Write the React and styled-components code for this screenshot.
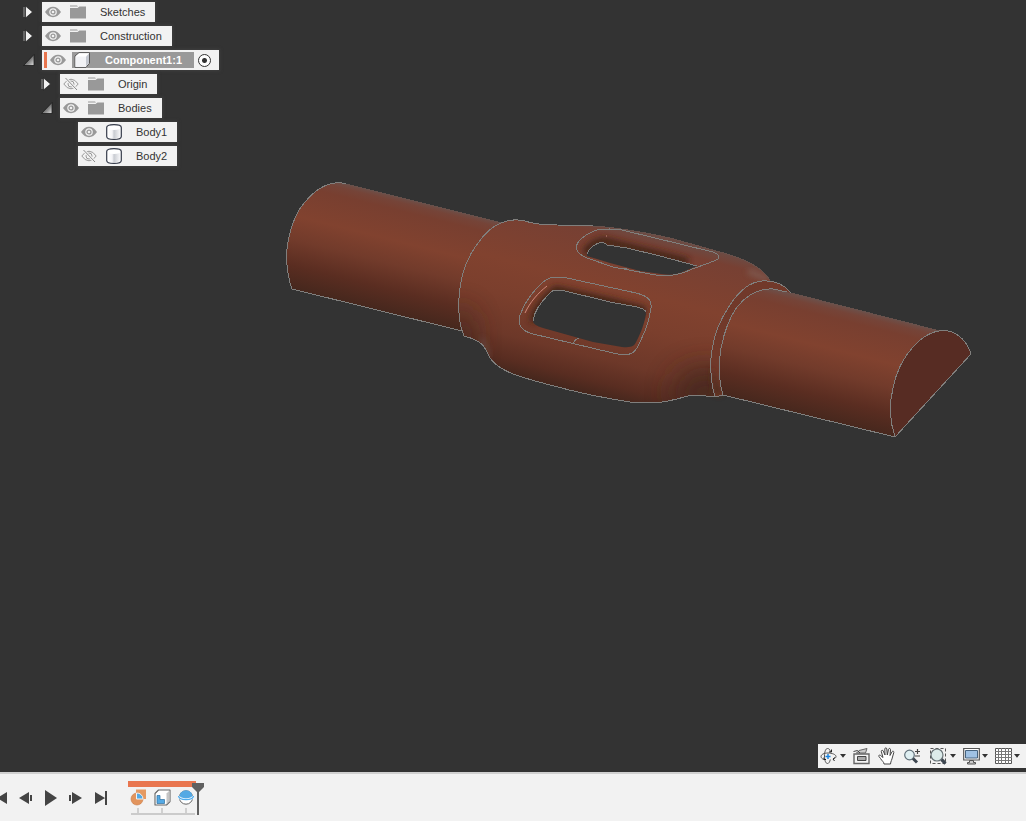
import { useState } from 'react'
import styled, { createGlobalStyle } from 'styled-components'

const GlobalStyle = createGlobalStyle`
    * {
        box-sizing: border-box;
    }
    body {
        margin: 0;
        background: #333;
        color: #333;
        font-family: "Liberation Sans", Arial, sans-serif;
        font-size: 11px;
    }
    button {
        padding: 0;
        border: none;
        background: transparent;
        color: inherit;
        font: inherit;
        cursor: pointer;
    }
    svg {
        display: block;
    }
`;

const Page = styled.div`
    display: flex;
    flex-direction: column;
    min-height: 100vh;
`;

const Viewport = styled.main`
    position: relative;
    flex: 1;
    display: flex;
    flex-direction: column;
    justify-content: space-between;
    padding: 2px 0 4px;
    overflow: hidden;
    background: #333;
`;

const ModelCanvas = styled.svg`
    position: absolute;
    inset: 0;
    width: 100%;
    height: 100%;
`;

const Browser = styled.nav`
    position: relative;
    align-self: flex-start;
    padding-left: 20px;
`;

const TreeList = styled.ul`
    list-style: none;
    display: flex;
    flex-direction: column;
    gap: 4px;
    margin: 0;
    padding: 0;
    & & {
        margin-top: 4px;
        padding-left: 18px;
    }
`;

const TreeRow = styled.div`
    display: flex;
    align-items: center;
    gap: 6px;
    height: 20px;
`;

const ToggleButton = styled.button`
    width: 16px;
    height: 16px;
    visibility: ${props => props.$hidden ? 'hidden' : 'visible'};
`;

const RowPanel = styled.div`
    display: flex;
    align-items: center;
    height: 20px;
    padding: 0 ${props => props.$active ? 8 : 0}px 0 ${props => props.$active ? 2 : 3}px;
    background: #f2f2f2;
    box-shadow: 0 0 3px 1px #3f3f3f;
`;

const ActiveBar = styled.span`
    width: 3px;
    height: 16px;
    margin-right: 3px;
    background: #e9764f;
`;

const EyeButton = styled.button`
    width: 16px;
    height: 16px;
`;

const NodeLabel = styled.span`
    display: flex;
    align-items: center;
    gap: 14px;
    height: 16px;
    margin-left: ${props => props.$active ? 6 : 9}px;
    padding: 0 ${props => props.$active ? 12 : 10}px 0 ${props => props.$active ? 2 : 0}px;
    background: ${props => props.$active ? '#999' : 'transparent'};
    color: ${props => props.$active ? '#fff' : '#333'};
    font-weight: ${props => props.$active ? 'bold' : 'normal'};
    line-height: 16px;
`;

const ActivateRadio = styled.input`
    appearance: none;
    width: 13px;
    height: 13px;
    margin: 0 0 0 4px;
    border: 1px solid #333;
    border-radius: 50%;
    background: radial-gradient(circle, #333 2px, #fff 3px);
`;

const NavBar = styled.div`
    position: relative;
    align-self: flex-end;
    display: flex;
    align-items: center;
    height: 24px;
    padding: 0 6px 0 2px;
    gap: 7px;
    background: #f2f2f2;
`;

const NavButton = styled.button`
    display: flex;
    align-items: center;
    gap: 2px;
    height: 24px;
`;

const Timeline = styled.footer`
    display: flex;
    height: 49px;
    overflow: hidden;
    border-top: 2px solid #d0d0d0;
    background: #f2f2f2;
`;

const Transport = styled.div`
    display: flex;
    align-items: center;
    margin: 0 13px 0 -12px;
`;

const TransportButton = styled.button`
    width: 25px;
    height: 24px;
    display: flex;
    align-items: center;
    justify-content: center;
`;

const Track = styled.div`
    position: relative;
    padding-top: 7px;
`;

const GroupBar = styled.div`
    width: 68px;
    height: 6px;
    margin-left: 2px;
    background: #e9764f;
`;

const FeatureList = styled.div`
    display: flex;
`;

const FeatureButton = styled.button`
    display: flex;
    flex-direction: column;
    align-items: center;
    justify-content: space-between;
    width: 24px;
    height: 26px;
    padding-top: 2px;
    &::after {
        content: '';
        width: 2px;
        height: 5px;
        background: #d0d0d0;
    }
`;

const TrackLine = styled.div`
    width: 64px;
    height: 2px;
    margin-left: 5px;
    background: #cbcbcb;
`;

const Marker = styled.svg`
    position: absolute;
    top: 9px;
    left: 66px;
`;

const EyeIcon = ({ off }) => (
    <svg width="16" height="16" viewBox="0 0 16 16" fill="none">
        {off ? (
            <>
                <path d="M.8 8Q4 3.2 8 3.2T15.2 8Q12 12.8 8 12.8T.8 8Z" stroke="#999" />
                <circle cx="8" cy="8" r="3" stroke="#999" />
                <path d="M2.5 2 14 14" stroke="#f2f2f2" strokeWidth="2.6" />
                <path d="M2.5 2 14 14" stroke="#8c8c8c" strokeWidth="1" />
            </>
        ) : (
            <>
                <path d="M0 8Q3.5 2.8 8 2.8T16 8Q12.5 13.2 8 13.2T0 8Z" fill="#999" />
                <circle cx="8" cy="8" r="3.2" stroke="#f2f2f2" strokeWidth="1.2" />
                <circle cx="8" cy="8" r="1.3" fill="#f2f2f2" />
            </>
        )}
    </svg>
)

const FolderIcon = () => (
    <svg width="16" height="16" viewBox="0 0 16 16">
        <path d="M0 1.500h7l1 1H0zM0 4h7.500l2-1.500H16V14.500H0z" fill="#999" />
    </svg>
)

const BodyIcon = () => (
    <svg width="16" height="16" viewBox="0 0 16 16">
        <defs>
            <linearGradient id="cyl">
                <stop offset="0" stopColor="#fff" />
                <stop offset=".35" stopColor="#f4f4f7" />
                <stop offset=".5" stopColor="#c9ccd2" />
                <stop offset="1" stopColor="#f6f6f8" />
            </linearGradient>
        </defs>
        <path d="M.7 3.500C.7 1.500 3 .6 8 .6s7.300.9 7.300 2.900v9c0 2-2.300 2.900-7.300 2.900S.7 14.500.7 12.500z" fill="#fff" stroke="#343a49" strokeWidth="1.200" />
        <path d="M2 5q6 2 12 0v7.500q-1 1.800-6 1.800t-6-1.800z" fill="url(#cyl)" />
    </svg>
)

const ComponentIcon = () => (
    <svg width="17" height="16" viewBox="0 0 17 16">
        <path d="M1 4 5 .6h10.500v10.500L12 15.400H1z" fill="#fff" stroke="#555" strokeWidth="1" strokeLinejoin="round" />
        <path d="M12 4.500 15 1.500v9.300L12 14.500z" fill="#c3c7cf" />
        <path d="M1.500 4.500H12v10.400H1.500z" fill="#f2f3f6" />
    </svg>
)

const ToggleIcon = ({ open }) => (
    <svg width="16" height="16" viewBox="0 0 16 16">
        <defs>
            <linearGradient id="tog" x1="0" y1="0" x2="1" y2="1">
                <stop offset=".4" stopColor="#555" />
                <stop offset=".9" stopColor="#ccc" />
            </linearGradient>
        </defs>
        {open ? (
            <path d="M14 2.500v11H3.500z" fill="url(#tog)" stroke="#1c1c1c" strokeWidth=".8" />
        ) : (
            <>
                <path d="M4 3v10" stroke="#999" strokeWidth="1" />
                <path d="M5.500 2 12.500 8l-7 6z" fill="#f2f2f2" stroke="#111" strokeWidth=".6" />
            </>
        )}
    </svg>
)

const nodeIcons = {
    folder: FolderIcon,
    body: BodyIcon,
    component: ComponentIcon,
}

const tree = [
    { name: 'Sketches', icon: 'folder', visible: true, expandable: true },
    { name: 'Construction', icon: 'folder', visible: true, expandable: true },
    {
        name: 'Component1:1', icon: 'component', visible: true, active: true, expandable: true,
        children: [
            { name: 'Origin', icon: 'folder', visible: false, expandable: true },
            {
                name: 'Bodies', icon: 'folder', visible: true, expandable: true,
                children: [
                    { name: 'Body1', icon: 'body', visible: true },
                    { name: 'Body2', icon: 'body', visible: false },
                ],
            },
        ],
    },
]

const TreeNode = ({ node }) => {
    const [open, setOpen] = useState(Boolean(node.children));
    const [visible, setVisible] = useState(node.visible);
    const Icon = nodeIcons[node.icon];

    return (
        <li>
            <TreeRow>
                <ToggleButton
                    $hidden={!node.expandable}
                    aria-label={`Expand ${node.name}`}
                    aria-expanded={open}
                    onClick={() => setOpen(!open)}
                >
                    <ToggleIcon open={open} />
                </ToggleButton>
                <RowPanel $active={node.active}>
                    {node.active && <ActiveBar />}
                    <EyeButton aria-label={`Show ${node.name}`} aria-pressed={visible} onClick={() => setVisible(!visible)}>
                        <EyeIcon off={!visible} />
                    </EyeButton>
                    <NodeLabel $active={node.active}>
                        <Icon />
                        {node.name}
                    </NodeLabel>
                    {node.active && <ActivateRadio type="radio" name="active" defaultChecked aria-label={`Activate ${node.name}`} />}
                </RowPanel>
            </TreeRow>
            {open && node.children && (
                <TreeList>
                    {node.children.map(child => <TreeNode key={child.name} node={child} />)}
                </TreeList>
            )}
        </li>
    )
}

// Part outlines, in canvas units
const leftShaft = 'M292 289C286 272 285 252 289 237C292 222 298 210 305 202C315 190 325 184 335 183Q340 182 346 184L502 223L520 290L464 332Z'
const hub = 'M464 336C460 327 458 315 459 298C460 280 464 265 472 252C480 239 490 227 501 223Q513 218 525 221Q536 225 557 225Q578 226 593 226Q625 228 670 238L720 252C735 256 748 261 757 267Q764 272 770 280L775 300L723 395L715 397Q702 395 688 396C677 399 665 403 650 403Q640 403 630 402Q590 396 550 385Q530 380 513 374Q496 367 490 358C485 347 483 341 463 336Z'
const collar = 'M715 397C710 380 710 360 712 350C714 335 721 318 730 305C739 291 750 282 762 281C775 280 784 284 791 293L723 396Z'
const rightShaft = 'M723 395C718 378 719 360 721 348C724 333 730 317 737 307C746 296 758 288 773 289L787 292L940 331L971 354L895 437Z'
const cap = 'M895 437C890 422 889 404 893 388C896 373 903 358 913 347C924 335 936 329 948 331C959 333 968 343 971 354Z'
const lowerRim = 'M557 277Q562 277 567 278L636 293C648 296 652 300 651 308C649 324 643 336 637 348C632 356 624 356 613 353L533 334C521 331 517 324 520 315C524 304 532 292 543 282Q549 277 557 277Z'
const lowerHole = 'M557 290Q562 290 565 291L610 302L637 307Q646 309 646 314C644 326 639 337 635 344Q632 348 622 347L593 342L543 328Q533 325 533 321C534 312 541 302 549 294Q552 290 557 290Z'
const upperRim = 'M597 230Q610 228 622 230L713 252Q721 255 718 259C711 263 699 266 690 270C677 276 663 277 650 274L613 267L587 258C575 253 574 246 580 240Q587 233 597 230Z'
const upperHole = 'M587 254C589 248 596 243 602 242Q605 243 607 245L627 248L660 256L697 266L680 273Q672 276 661 274L640 271L610 263L587 256Z'

const Model = () => (
    <ModelCanvas viewBox="0 0 1026 772" preserveAspectRatio="xMidYMid meet" role="img" aria-label="Body1">
        <defs>
            <linearGradient id="shaft" gradientUnits="userSpaceOnUse" x1="342" y1="182" x2="314" y2="295">
                <stop offset="0" stopColor="#6c504a" />
                <stop offset=".05" stopColor="#754438" />
                <stop offset=".12" stopColor="#783f30" />
                <stop offset=".38" stopColor="#81422f" />
                <stop offset=".58" stopColor="#723b2b" />
                <stop offset=".8" stopColor="#5a2d21" />
                <stop offset="1" stopColor="#45271d" />
            </linearGradient>
            <linearGradient id="hubFill" gradientUnits="userSpaceOnUse" x1="640" y1="233" x2="599" y2="396">
                <stop offset="0" stopColor="#6d4a42" />
                <stop offset=".06" stopColor="#774033" />
                <stop offset=".35" stopColor="#81422f" />
                <stop offset=".55" stopColor="#7b3f2d" />
                <stop offset=".78" stopColor="#6d3829" />
                <stop offset=".92" stopColor="#592d21" />
                <stop offset="1" stopColor="#46271d" />
            </linearGradient>
            <filter id="soft3" x="-50%" y="-50%" width="200%" height="200%"><feGaussianBlur stdDeviation="3" /></filter>
            <filter id="soft14" x="-100%" y="-100%" width="300%" height="300%"><feGaussianBlur stdDeviation="14" /></filter>
            <clipPath id="hubClip"><path d={hub} /></clipPath>
            <clipPath id="lowerClip"><path d={lowerRim} /></clipPath>
            <clipPath id="upperClip"><path d={upperRim} /></clipPath>
        </defs>
        <path d={leftShaft} fill="url(#shaft)" />
        <path d={hub} fill="url(#hubFill)" />
        <g clipPath="url(#hubClip)">
            <ellipse cx="460" cy="336" rx="14" ry="28" fill="#43261d" opacity=".8" filter="url(#soft14)" />
            <ellipse cx="706" cy="392" rx="34" ry="26" fill="#43261d" opacity=".8" filter="url(#soft14)" />
            <path d="M482 338 489 357" stroke="#77655f" strokeWidth="2" filter="url(#soft3)" />
            <path d="M748 271 768 279" stroke="#847069" strokeWidth="4" opacity=".8" filter="url(#soft3)" />
        </g>
        <path d={collar} fill="#71392a" />
        <path d="M711 365 723 395H714Z" fill="#4b291f" filter="url(#soft3)" />
        <path d={rightShaft} fill="url(#shaft)" />
        <path d={cap} fill="#572c23" />
        <g clipPath="url(#lowerClip)">
            <path d="M534 322Q535 307 556 290L610 302 646 311" fill="none" stroke="#3e2018" strokeWidth="8" filter="url(#soft3)" />
            <path d="M547 286C538 293 530 302 525 313" fill="none" stroke="#cf8a7b" strokeWidth="1" />
        </g>
        <g clipPath="url(#upperClip)">
            <path d="M585 254Q590 243 604 241L688 262" fill="none" stroke="#3e2018" strokeWidth="7" filter="url(#soft3)" />
            <path d="M606 236h1" stroke="#c58b7e" />
        </g>
        <path d={lowerHole} fill="#333" />
        <path d={upperHole} fill="#333" />
        <g fill="none" stroke="#807f7d" strokeWidth="1" shapeRendering="crispEdges">
            <path d="M346 184 502 223M593 226Q625 228 670 238L720 252C735 256 748 261 757 267Q764 272 770 280M791 293 940 331" stroke="#68514b" />
            <path d="M462 331 292 289C286 272 285 252 289 237C292 222 298 210 305 202C315 190 325 184 335 183Q340 182 346 184" />
            <path d="M593 226 557 225Q536 225 525 221Q513 218 501 223C490 227 480 239 472 252C464 265 460 280 459 298C458 315 460 327 464 336C483 341 485 347 490 358Q496 367 513 374Q530 380 550 385Q590 396 630 402Q640 403 650 403C665 403 677 399 688 396Q702 395 715 397L723 395 895 437" />
            <path d="M715 397C710 380 710 360 712 350C714 335 721 318 730 305C739 291 750 282 762 281C775 280 784 284 791 293" />
            <path d="M723 395C718 378 719 360 721 348C724 333 730 317 737 307C746 296 758 288 773 289L787 292" />
            <path d={cap} />
            <path d={lowerRim} />
            <path d={upperRim} />
            <path d="M533 321C534 312 541 302 549 294Q552 290 557 290Q562 290 565 291L610 302 637 307Q645 309 646 312M573 344Q575 339 579 338M587 254C589 248 596 243 602 242Q605 243 607 245L627 248 660 256 697 266M621 269l6-1" />
        </g>
    </ModelCanvas>
)

const DropArrow = () => (
    <svg width="6" height="4" viewBox="0 0 6 4"><path d="M0 0h6L3 3.800z" fill="#333" /></svg>
)

const navTools = [
    {
        name: 'Orbit', menu: true,
        icon: (
            <svg width="18" height="18" viewBox="0 0 18 18" fill="none" stroke="#555">
                <path d="M4 12.500C2 12 1 10.500 1 9.500 1 7.500 4 6 8 6s8 1.500 8 3.500c0 1.200-1 2-2.500 2.500" />
                <path d="M10.500 5C10 2.500 9 1.500 7.500 1.500 5.500 1.500 4.500 5 4.500 9s1 7.500 3 7.500c1.300 0 2.300-1.500 2.800-4" />
                <path d="M6 12.500H4V10.500M9 5h2.500V2.500M15 10.500l-2 1.500 1.500 2" stroke="#222" />
                <path d="M5.500 9.500h5M8 7v5" stroke="#1682e0" strokeWidth="1.400" />
            </svg>
        ),
    },
    {
        name: 'Look At',
        icon: (
            <svg width="17" height="18" viewBox="0 0 17 18" fill="none" stroke="#666">
                <path d="M3.500 6 6 3.500l8-2L12.500 6z" fill="#ccc" />
                <path d="M.5 4.500 4.500 3.500 7 6" stroke="#444" />
                <path d="M1 7h15v9.500H1z" fill="#f6f6f6" strokeWidth="1.400" />
                <path d="M4.500 9.500h8.500v4H4.500z" fill="#aaa" stroke="#444" />
            </svg>
        ),
    },
    {
        name: 'Pan',
        icon: (
            <svg width="19" height="18" viewBox="0 0 19 18" fill="#fff" stroke="#444" strokeWidth="1" strokeLinejoin="round">
                <path d="M7 17c0-2-2-3-3.500-5.500L1.900 9.400c-.6-1.200.8-1.700 1.600-1L6 10.500 4.300 4.500c-.2-1.400 1.500-1.700 2-.4L8 8 7.800 2c0-1.500 1.900-1.500 2 0L10.300 8l1.200-5.700c.4-1.400 2.100-1 2 .4L13 8.500l2-3.700c.7-1.200 2.200-.5 1.800.7L15.500 10c-.6 3-1.700 4-2 7z" />
            </svg>
        ),
    },
    {
        name: 'Zoom',
        icon: (
            <svg width="18" height="18" viewBox="0 0 18 18" fill="none" stroke="#444" strokeWidth="1.200">
                <circle cx="6.500" cy="8" r="4.800" fill="#dfeff2" stroke="#60707a" />
                <path d="m10 11.500 4 4" stroke="#3d4650" strokeWidth="3" />
                <path d="M12 4.500h5M14.500 2v5M12 9h5" />
            </svg>
        ),
    },
    {
        name: 'Fit', menu: true,
        icon: (
            <svg width="20" height="18" viewBox="0 0 20 18" fill="none" stroke="#555">
                <path d="M2.500 1.500h15v15h-15z" strokeDasharray="3 2" />
                <circle cx="9" cy="8" r="6" fill="#dcebea" stroke="#687276" strokeWidth="1.200" />
                <path d="m13.500 12.500 4 4" stroke="#3d4650" strokeWidth="3.200" />
            </svg>
        ),
    },
    {
        name: 'Display Settings', menu: true,
        icon: (
            <svg width="17" height="18" viewBox="0 0 17 18" fill="none" stroke="#555">
                <path d="M.7 1.500h15.600v11.500H.7z" fill="#fff" strokeWidth="1.200" />
                <path d="M2.500 3.500h12v7.500h-12z" fill="#9fc1e3" stroke="#46637e" />
                <path d="M6.500 13.500h4v2h2v1.500h-8v-1.500h2z" fill="#ccc" />
            </svg>
        ),
    },
    {
        name: 'Grid and Snaps', menu: true,
        icon: (
            <svg width="17" height="18" viewBox="0 0 17 18" fill="none" stroke="#777">
                <path d="M.5 1.500h16v15H.5z" fill="#fff" stroke="#555" />
                <path d="M3.500 1v16M6.500 1v16M10.500 1v16M13.500 1v16M0 4.500h17M0 7.500h17M0 10.500h17M0 13.500h17" />
            </svg>
        ),
    },
]

const transportButtons = [
    { name: 'Go to start', path: 'M18 6v12L8 12zM5 6h2v12H5z' },
    { name: 'Step back', path: 'M15 6v12L5 12zM16 9h2v6h-2z' },
    { name: 'Play', path: 'M6 4v16l12-8z' },
    { name: 'Step forward', path: 'M8 6v12l10-6zM5 9h2v6H5z' },
    { name: 'Go to end', path: 'M6 6v12l10-6zM16 5h2v14h-2z' },
]

const features = [
    {
        name: 'Combine',
        icon: (
            <svg width="16" height="17" viewBox="0 0 16 17">
                <path d="M6 .5h10V10H6z" fill="#e59a63" />
                <circle cx="7" cy="10" r="6" fill="#e2945d" stroke="#c97a44" strokeWidth=".6" />
                <path d="M6.500 10V4a6 6 0 0 1 6.500 6z" fill="#54a9e4" stroke="#f2f2f2" strokeWidth="1" />
            </svg>
        ),
    },
    {
        name: 'Base Feature',
        icon: (
            <svg width="17" height="17" viewBox="0 0 17 17">
                <path d="M1 4.500 4.500 1H16v11.500L12.500 16H1z" fill="#fff" stroke="#666" strokeWidth="1.100" strokeLinejoin="round" />
                <path d="M12.500 4.500 15.500 1.500v10.700L12.500 15.500z" fill="#c5c5c5" />
                <path d="M3 6.500h3v4h4.500V14.500H3z" fill="#54a9e4" stroke="#2c6d9d" strokeWidth=".7" />
            </svg>
        ),
    },
    {
        name: 'Split Body',
        icon: (
            <svg width="16" height="17" viewBox="0 0 16 17">
                <circle cx="8" cy="8.500" r="6.700" fill="#fff" stroke="#666" />
                <path d="M1.300 8A6.700 6.700 0 0 1 14.700 8Q8 12 1.300 8z" fill="#54a9e4" />
                <path d="M.5 7Q1 10.500 8 10.500T15.500 7" fill="none" stroke="#fff" strokeWidth="2.500" />
                <path d="M.6 7Q1 10.500 8 10.500T15.400 7" fill="none" stroke="#4eabed" strokeWidth="1.300" />
            </svg>
        ),
    },
]

const App = () => {
    return (
        <Page>
            <GlobalStyle />
            <Viewport>
                <Model />
                <Browser aria-label="Browser">
                    <TreeList>
                        {tree.map(node => <TreeNode key={node.name} node={node} />)}
                    </TreeList>
                </Browser>
                <NavBar role="toolbar" aria-label="Navigation">
                    {navTools.map(tool => (
                        <NavButton key={tool.name} aria-label={tool.name}>
                            {tool.icon}
                            {tool.menu && <DropArrow />}
                        </NavButton>
                    ))}
                </NavBar>
            </Viewport>
            <Timeline>
                <Transport>
                    {transportButtons.map(button => (
                        <TransportButton key={button.name} aria-label={button.name}>
                            <svg width="24" height="24" viewBox="0 0 24 24" fill="#444"><path d={button.path} /></svg>
                        </TransportButton>
                    ))}
                </Transport>
                <Track>
                    <GroupBar />
                    <FeatureList>
                        {features.map(feature => (
                            <FeatureButton key={feature.name} aria-label={feature.name}>
                                {feature.icon}
                            </FeatureButton>
                        ))}
                    </FeatureList>
                    <TrackLine />
                    <Marker width="12" height="32" viewBox="0 0 12 32" fill="#606060">
                        <path d="M0 0h12v4L7 9v23H5V9L0 4z" />
                    </Marker>
                </Track>
            </Timeline>
        </Page>
    )
}

export default App
